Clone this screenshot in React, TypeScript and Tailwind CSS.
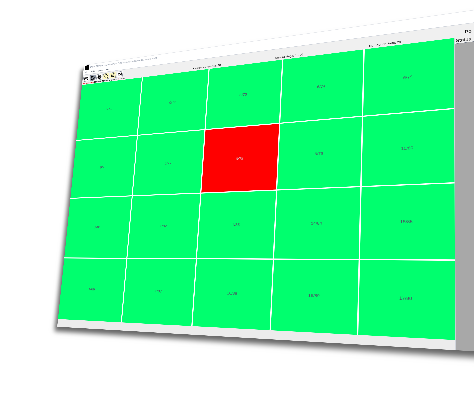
import { FolderOpen, Printer, Save, Search, SlidersHorizontal, SkipForward } from "lucide-react";

const cells = [
  "6/71", "6/72", "6/73", "6/74", "6/75",
  "6/76", "6/77", "6/78", "6/79", "10/80",
  "1/81", "1/82", "1/83", "14/84", "15/85",
  "1/86", "1/87", "16/88", "16/89", "17/90",
];

const tools = [
  { icon: FolderOpen, cls: "bg-white text-black" },
  { icon: Save, cls: "bg-gray-400 text-black" },
  { icon: Printer, cls: "bg-white text-black" },
  { icon: Search, cls: "bg-yellow-100 text-black" },
  { icon: SlidersHorizontal, cls: "bg-yellow-100 text-black" },
  { icon: SkipForward, cls: "bg-white text-black" },
];

export default function App() {
  return (
    <div className="h-screen w-screen overflow-hidden bg-white font-['Liberation_Sans',sans-serif]">
      {/* tilted window, the matrix maps the 1600x1200 grid onto the picture */}
      <div className="flex h-[1347px] w-[1800px] origin-top-left flex-col bg-white shadow-[-12px_22px_22px_rgba(0,0,0,0.6)] [transform:matrix3d(0.169838,-0.034619,0,-0.00013802,-0.023017,0.178408,0,-0.00005202,0,0,1,0,82,85,0,1)_translateY(-110px)]">
        <div className="flex h-[56px] shrink-0 flex-col border-t-2 border-b-2 border-t-gray-200 border-b-gray-300 bg-white">
          <div className="flex h-[30px] items-center gap-2 px-2">
            <div className="h-[24px] w-[20px] bg-black" />
            <span className="text-[12px] text-gray-400">
              Parts Monitor - C:\Program Files\Inspection\Records\Current.mdb
            </span>
          </div>
          <div className="flex h-[22px] items-center gap-4 px-2 text-[12px] text-gray-600">
            <span>File</span>
            <span>Edit</span>
            <span>View</span>
            <span>Help</span>
          </div>
        </div>

        <div className="flex h-[54px] shrink-0 bg-[#f0f0f0] text-[13px] text-black">
          <div className="flex w-[565px] shrink-0 flex-col justify-end gap-[2px] pl-1">
            <div className="flex gap-[5px]">
              {tools.map((t, i) => (
                <div key={i} className={`flex h-[30px] w-[31px] items-center justify-center border border-gray-500 ${t.cls}`}>
                  <t.icon size={22} strokeWidth={2.5} />
                </div>
              ))}
            </div>
            <div className="h-[15px] text-[11px] font-bold leading-[15px]">
              <span className="text-red-600">Processing </span>
              Report: Machine Center <span className="text-red-600">4</span> Parts
            </div>
          </div>
          <div className="flex w-[363px] shrink-0 items-end pb-[3px]">Last Index Record: 38</div>
          <div className="flex w-[372px] shrink-0 items-end pb-[3px]">Record Page: 1 - 20</div>
          <div className="flex w-[300px] shrink-0 items-end pb-[3px]">Number of Parts: 20</div>
          <div className="flex flex-1 items-end pb-[6px] pl-[36px] text-[18px]">Po</div>
        </div>

        <div className="flex min-h-0 flex-1">
          <div className="flex w-[1600px] shrink-0 flex-col">
            <div className="grid h-[1200px] shrink-0 grid-cols-5 grid-rows-4 gap-[5px] bg-white">
              {cells.map((c, i) => (
                <div
                  key={i}
                  className={`flex items-center justify-center text-[17px] ${
                    i === 7 ? "bg-[#ff0000] text-gray-300" : "bg-[#00ff6e] text-gray-600"
                  }`}
                >
                  {c}
                </div>
              ))}
            </div>
            <div className="flex-1 bg-[#ececec]" />
          </div>
          <div className="flex flex-1 flex-col border-l-2 border-gray-300 bg-[#a8a8a8]">
            <div className="h-[26px] border-b border-gray-500 bg-[#f0f0f0] px-1 text-[18px] leading-[26px] text-black">
              Status
            </div>
          </div>
        </div>
      </div>
    </div>
  );
}
